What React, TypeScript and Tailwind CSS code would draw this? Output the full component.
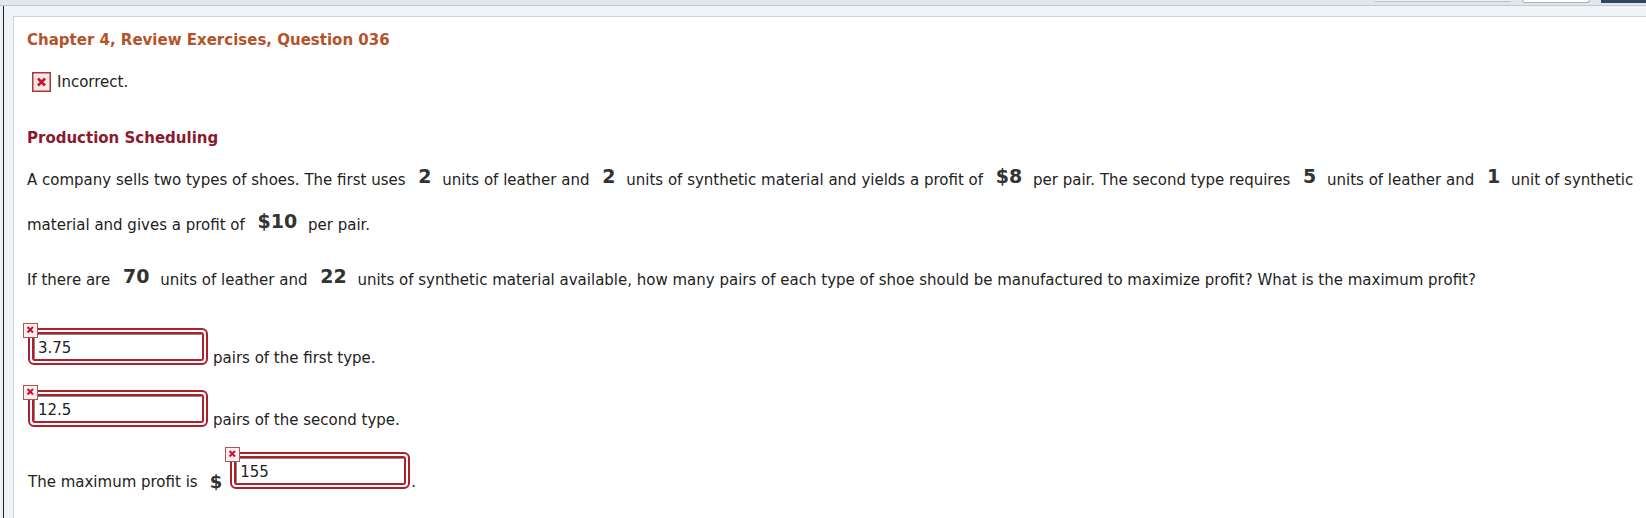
import React from "react";

function BigX() {
  return (
    <svg width="19" height="20" viewBox="0 0 19 20" className="shrink-0">
      <rect x="0.75" y="0.75" width="17.5" height="18.5" fill="#f7e6e6" stroke="#a23b3b" strokeWidth="1.5" />
      <path d="M6 6.5 L13 13.5 M13 6.5 L6 13.5" stroke="#c8102e" strokeWidth="2.5" />
    </svg>
  );
}

function SmallX() {
  return (
    <svg width="15" height="15" viewBox="0 0 15 15" className="absolute -left-[7px] -top-[7px]">
      <rect x="0.5" y="0.5" width="14" height="14" fill="#f8eeee" stroke="#a85656" />
      <path d="M4.5 4 L10 9.5 M10 4 L4.5 9.5" stroke="#c8102e" strokeWidth="2" />
    </svg>
  );
}

function AnswerBox({ value }: { value: string }) {
  return (
    <span className="relative inline-flex w-[180px] h-[37px] shrink-0 rounded-[6px] border-2 border-[#ad1f2b] bg-white p-[2px]">
      <span className="flex w-full h-full rounded-[3px] border-2 border-[#ad1f2b] overflow-hidden">
        <input
          readOnly
          defaultValue={value}
          className="w-full h-full border-t border-l border-b-0 border-r-0 border-[#8a8a8a] pl-[3px] pt-[2px] pb-0 text-[15px] text-[#222] bg-white outline-none"
        />
      </span>
      <SmallX />
    </span>
  );
}

function N({ children }: { children: React.ReactNode }) {
  return (
    <span className="ml-[8px] mr-[6px] text-[19px] font-bold text-[#333] leading-none align-[2px]">{children}</span>
  );
}

export default function App() {
  return (
    <div className="w-[1646px] h-[518px] overflow-hidden bg-white font-['DejaVu_Sans',sans-serif] text-[15px] text-[#222]">
      <div className="h-[6px] bg-[#e1e6ed] border-b border-[#c3c9d1] flex items-start justify-end gap-[11px]">
        <div className="w-[136px] h-[2px] bg-[#f0f2f5] border-b border-[#b8bec7]" />
        <div className="w-[68px] h-[3px] bg-white border-x border-b border-[#a9b0b9] rounded-b-[3px]" />
        <div className="w-[45px] h-[3px] bg-[#33475b]" />
      </div>
      <div className="flex h-[512px]">
        <div className="w-[3px] bg-[#eef2f6]" />
        <div className="w-[1px] bg-[#222]" />
        <div className="flex-1 bg-[#eff4f7] pl-[9px] pt-[10px]">
          <div className="h-full bg-white border-l border-t border-[#cdd2d8] pl-[13px] pt-[13px]">
            <div className="font-bold text-[#b4532a] leading-[20px]">Chapter 4, Review Exercises, Question 036</div>

            <div className="mt-[22px] h-[20px] flex items-center gap-[6px] pl-[5px]">
              <BigX />
              <span className="leading-[20px]">Incorrect.</span>
            </div>

            <div className="mt-[36px] font-bold text-[#8b1a2e] leading-[20px]">Production Scheduling</div>

            <p className="mt-[10px] leading-[45px] whitespace-nowrap">
              A company sells two types of shoes. The first uses <N>2</N> units of leather and <N>2</N> units of
              synthetic material and yields a profit of <N>$8</N> per pair. The second type requires <N>5</N> units
              of leather and <N>1</N> unit of synthetic
              <br />
              material and gives a profit of <N>$10</N> per pair.
            </p>

            <p className="mt-[10px] leading-[45px] whitespace-nowrap">
              If there are <N>70</N> units of leather and <N>22</N> units of synthetic material available, how many
              pairs of each type of shoe should be manufactured to maximize profit? What is the maximum profit?
            </p>

            <div className="mt-[25px] flex items-end pl-[1px]">
              <AnswerBox value="3.75" />
              <span className="ml-[5px] leading-[14px]">pairs of the first type.</span>
            </div>

            <div className="mt-[25px] flex items-end pl-[1px]">
              <AnswerBox value="12.5" />
              <span className="ml-[5px] leading-[14px]">pairs of the second type.</span>
            </div>

            <div className="mt-[25px] flex items-end pl-[1px]">
              <span className="leading-[14px]">The maximum profit is</span>
              <span className="ml-[12px] mr-[8px] text-[18px] font-bold text-[#333] leading-[14px]">$</span>
              <AnswerBox value="155" />
              <span className="ml-[1px] leading-[14px]">.</span>
            </div>
          </div>
        </div>
      </div>
    </div>
  );
}
